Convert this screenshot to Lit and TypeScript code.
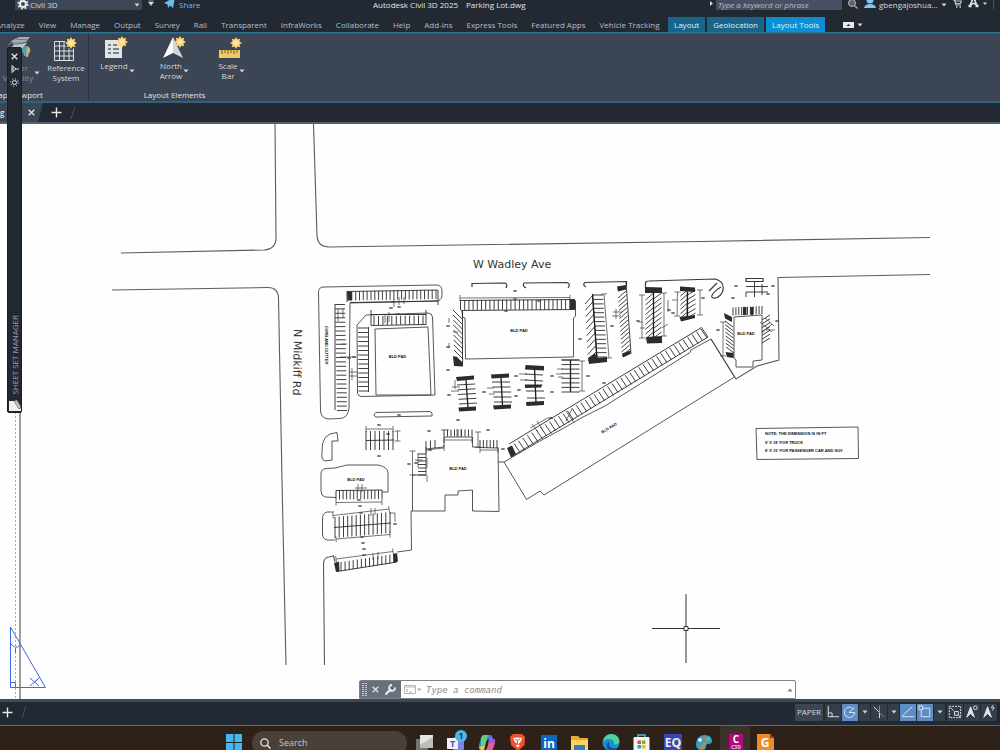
import { LitElement, html, css, svg, TemplateResult } from "lit";
import { customElement } from "lit/decorators.js";
import { classMap } from "lit/directives/class-map.js";

type Pt = [number, number];

/** n parallel strokes, evenly spread from a to b, each reaching by (dx, dy). */
function stalls(a: Pt, b: Pt, n: number, dx: number, dy: number): string {
  let d = "";
  for (let i = 0; i < n; i++) {
    const t = i / (n - 1);
    const x = a[0] + (b[0] - a[0]) * t;
    const y = a[1] + (b[1] - a[1]) * t;
    d += `M${x.toFixed(1)} ${y.toFixed(1)}l${dx} ${dy}`;
  }
  return d;
}

/** A dimension line with end ticks. */
function dim(a: Pt, b: Pt): string {
  const len = Math.hypot(b[0] - a[0], b[1] - a[1]);
  const ux = (b[0] - a[0]) / len;
  const uy = (b[1] - a[1]) / len;
  const tick = (p: Pt) => `M${p[0] - uy * 3} ${p[1] + ux * 3}L${p[0] + uy * 3} ${p[1] - ux * 3}`;
  return `M${a}L${b}${tick(a)}${tick(b)}`;
}

const roads = [
  "M275 124L276 238Q276 249 264 250L121 253",
  "M313.500 124L317 236Q318 247 329 247L700 241.500L930 237.500",
  "M112 290L268 287.500Q278 287.500 278.500 298L282 480L286 665",
  "M324.500 665L323.500 564Q324 557 329 557L333.500 556L335 562",
  "M930 274.500L778 277.500L779 360L757 366L736 379L711 339",
];

const outlines = [
  "M318.500 293Q318 287 324 287L436 285Q442 285 442 291V296Q441 301 436 301L350 303L349 408Q348 418 340 418.500L328 419Q321 418 320.500 411Z",
  "M357.500 393L357 325L366 315L428 313Q432 313 432.500 317L435 395L361 396.500Q358 396 357.500 393Z",
  "M375 329L428 327L431 395H376Z",
  "M376 412.500L430 411.500Q433 412 432 416L376 417Q372 415 376 412.500Z",
  "M462 311L462.500 317L465 318L465.500 359L573.500 357V318L575.500 316V301",
  "M711 339L734.500 377L544 495L540 491L526.500 499.500L504 462L540 441L562 429L583 417L605 406L690 352.500L691 350L711 339",
  "M498 462H504",
  "M322 452Q321 433 337 432.500L338 441H332V460L325 461Q321 460 322 452Z",
  "M336 497.500L325 497Q321 496 321 491V474Q321 469 326 468.500L335 468L347 465H378Q388 467 388 473V492H382",
  "M334 512H327Q322.500 513 322.500 519V534Q323 540 328 540L335 540",
  "M397 552L411.500 550L411 511H445V495H458V491L472.500 490V511L499 511.500L498 448L480 447.500L472.500 447V437H444V447L435 448L426 449V475H412.500V511",
  "M734 317L762 315V360L753 361V367H736V360L734 358Z",
  "M756 428.500L858 427L858.500 458.500L757 459.500Z",
];

const kerbs = [
  "M472 287V283.500L505 283Q508 284 506 288",
  "M526 288Q522 286 524 283L567 282.500Q571 284 568 288",
  "M586 287Q582 285 585 282.500L626.500 281.500V286",
  "M645.500 288V282.500Q646 281 649 281L715 279Q724 281 723 289",
  "M723 288C724 293 718 299 713 298C709 297 715 290 721 287M709 291L717 283",
  "M746 278.500H763V281.500H746Z",
];

const stallRuns = [
  "M347 291.500L437.500 290M335 304V410M350 302.500L438 301M438 290V305M347 291V302",
  stalls([348, 291.5], [436, 290], 24, 0, 9),
  stalls([335, 304.5], [337, 410.5], 25, 10, 0),
  "M371 325.500L426 324.500M371 325V310M426 325V310M371 314.500H426M368.500 327V392",
  stalls([374, 325], [423, 324.5], 12, 0, -9),
  stalls([368, 328], [368.5, 391], 15, -10, 0),
  "M460 300.500L575 299.500M461 310.500L575 309.500",
  stalls([460.5, 300], [574, 299.5], 28, 0, 10),
  "M462.500 311V365",
  stalls([453, 310], [454, 350], 9, 9, 9),
  "M592.500 294L597 359",
  stalls([593, 295], [596, 352], 10, -8, 9),
  stalls([593, 295], [597, 357], 15, 10, 0),
  "M626 282L631 354",
  stalls([626, 291], [630, 349], 15, -8, 7),
  "M653.500 288V343",
  stalls([653.5, 293], [653.5, 332], 9, -8, 7),
  stalls([653.5, 299], [653.5, 338], 9, 8, -6),
  "M687.500 288L687 320",
  stalls([687.5, 290], [687.5, 312], 6, -7, 6),
  stalls([687.5, 295], [687.5, 318], 6, 8, -5),
  "M754.500 282V297M746 286.500H768M746 292H768M746 292V297M762 284V295",
  stalls([733, 315.500], [762, 314], 11, 0, -8),
  stalls([725, 321], [726, 347], 8, 8, 6),
  stalls([762, 320], [762, 343], 7, 8, -5),
  stalls([457, 385], [459, 404], 5, 18, -1),
  stalls([492, 382], [494, 402], 5, 18, 0),
  stalls([525, 374], [525, 380], 2, 18, 1),
  stalls([526, 391], [527, 398], 2, 18, 0),
  "M561.500 360H579",
  stalls([561.5, 360], [561.5, 392], 8, 18, 0),
  "M509 444L701.500 327.500L708 337",
  "M511 457L708 337",
  stalls([514, 443.5], [701, 329], 43, 6, 9),
  "M366 440.500L394 440",
  stalls([366, 431], [393, 431], 7, 0, 19),
  "M336 490.500L382 490",
  stalls([336, 490.5], [382, 490], 14, 0, 9),
  "M334 527.500L391 523",
  stalls([335, 517], [390, 512], 14, 0, 21),
  "M337 571.500L397 562",
  stalls([341, 562], [394, 554], 14, 0, 9),
  stalls([444, 436.5], [472, 436.5], 9, 0, -7),
  stalls([426, 449], [435, 448], 3, 0, -8),
  stalls([480, 448], [497, 448], 6, 0, -8),
  stalls([426, 454], [426, 475], 7, -8, 0),
];

const spines = "M466 380L468 408M501 377L502.500 406M534.500 368L536 403M570.500 360V392M653.500 288V340M592.500 294L597 359M687.500 290V318";

const dims = [
  dim([460, 298], [570, 297.5]),
  dim([604, 294], [609, 358]),
  dim([582, 361], [582, 391]),
  dim([642, 295], [642, 338]),
  dim([664, 293], [664, 336]),
  dim([677.5, 292], [677, 316]),
  dim([700, 290], [700, 315]),
  dim([723, 322], [723, 356]),
  dim([366, 429], [393, 429]),
  dim([397.5, 431], [397.5, 441]),
  dim([336, 502.5], [382, 502]),
  dim([333, 515.5], [389, 509]),
  dim([336, 539], [390, 534.5]),
  dim([336, 559], [393, 551.5]),
  dim([412.5, 451], [412.5, 475]),
  dim([444, 440], [472, 440]),
  dim([480, 450], [498, 450]),
  dim([478, 432], [478, 447]),
  dim([426, 450], [444, 448]),
  "M453 332l5 0M449 318v5M449 343v5M557 369h6M556 374h6M558 377h5M519 374h8M520 380h7M487 388h7M489 394h6",
  "M452 387h8M451 391h8M455 380v9M338 309v12M343 308v10M341 344h6M352 368v12M349 372h9M349 376h9M340 357h16M385 314v9M389 312v10M394 299v8M399 297v8M404 297v7",
  "M616 309v10M613 312h9M612 316h9M638 322h5M640 328h5M668 300v12M672 300l5 0M668 324l-6 4M760 322l12 10M762 333l10-9M765 318l9 8M766 330h9",
  "M532 424l6 8M537 421l5 8M530 428l14-8q3-3 9-2M566 411l8 12M572 409l-6 12M415 460h8M418 453v14M427 458v10M427 475v7",
  "M457 429v8M461 429v8M441 430h8M358 484v8M362 484v8M355 488h12M371 508v8M375 508v7M373 553v7M378 552v7M389 513h6v9",
];

const solids = [
  "M570 300H575.500V309.500H570Z",
  "M453 356L457 357L463 363V366.500L454 366Z",
  "M456 377L474 375.500V379.500L457 381Z",
  "M458.500 407.500L476 406.500V410.500L459 411.500Z",
  "M491 374.500L509 373.500V377.500L491.500 378.500Z",
  "M493 405.500L511 404.500V408.500L494 409.500Z",
  "M525.500 365L544 366V370.500L525 369.500Z",
  "M525 384.500L542.500 384.500L541 387.500L525 388Z",
  "M526 402L544 401V405L526.500 406Z",
  "M588 358L595 353L597 358L607 357V362L589 364Z",
  "M617 286.500L626 285V289.500L618 291.500Z",
  "M622 353.500L630.500 350.500V354L623 357.500Z",
  "M645 287L662 287.500V293L645 293Z",
  "M646 337L662 336V343L647 343.500Z",
  "M680 286.500L695 287.500V292L680 291Z",
  "M679.500 317L687 316L695 315V318L681 321.500Z",
  "M743 307H746.500V315H743ZM750.500 307H753V315H750.500Z",
  "M724 313L732 317V322L725 318.500Z",
  "M725.500 352L733.500 353V358L727 357Z",
  "M507 448L512 445.500L516 454L511 457.500Z",
  "M334 563L339 561.500L339.500 571L336 572Z",
  "M393 554L397 553L398 561.500L393.500 562.500Z",
  "M347 291.500L352 292V300.500H348Z",
];

// Centres of the unlettered dimension tags.
const tags: Pt[] = [
  [391, 308], [399, 307], [393, 302], [398, 314], [354, 357], [349, 358], [515, 291], [515, 299], [506, 311],
  [539, 301], [448, 326], [448, 347], [448, 370], [449, 395], [484, 392], [516, 376], [516, 396], [519, 390],
  [552, 376], [552, 392], [588, 376], [580, 339], [612, 326], [638, 321], [669, 310], [703, 298], [673, 313],
  [736, 286], [733, 298], [773, 286], [768, 294], [777, 321], [718, 330], [604, 383], [551, 418], [379, 425],
  [379, 456], [388, 434], [429, 431], [458, 420], [488, 430], [503, 449], [430, 450], [409, 464], [416, 463],
  [359, 500], [360, 506], [361, 513], [362, 537], [363, 543], [364, 549], [364, 555], [395, 524], [399, 415],
];

const tabs = [
  "Analyze", "View", "Manage", "Output", "Survey", "Rail", "Transparent", "InfraWorks", "Collaborate",
  "Help", "Add-ins", "Express Tools", "Featured Apps", "Vehicle Tracking",
];
const contextTabs = ["Layout", "Geolocation", "Layout Tools"];

const spark = (x: number, y: number) => svg`
  <g transform="translate(${x} ${y})">
    <path d="M0-6L1.400-3.400L4.200-4.200L3.400-1.400L6 0L3.400 1.400L4.200 4.200L1.400 3.400L0 6L-1.400 3.400L-4.200 4.200L-3.400 1.400L-6 0L-3.400-1.400L-4.200-4.200L-1.400-3.400Z" fill="#ffd978"/>
    <circle r="2.300" fill="#ffe6a3"/>
  </g>`;

const toolIcons: Record<string, TemplateResult> = {
  layer: svg`<path d="M5 4L13 0H24L20 5L8 8Z" fill="#a9adb3"/><path d="M2 8L7 5M4 6H21M10 2L22 3" stroke="#6e757f"/><path d="M3 12L8 8L21 6L16 12Z" fill="#c3c6ca"/><path d="M16 12A5 5 0 0 1 21 9V19H18Q18 16 16 15Z" fill="#4fa0b8"/><path d="M21 9A5 5 0 0 1 24 15Q22 17 22 20H20Z" fill="#cfae72"/>`,
  grid: svg`<path d="M0.500 4.500H19.500V23.500H0.500ZM0.500 9H19.500M0.500 14H19.500M0.500 19H19.500M5.500 4.500V23.500M10 4.500V23.500M15 4.500V23.500" fill="none" stroke="#dfe1e4"/><circle cx="17" cy="6" r="6" fill="#3c4553"/>${spark(17, 6)}`,
  legend: svg`<path d="M3 3H16L20 8V21H3Z" fill="#e3e4e6"/><path d="M6 8H9M11 8H15M6 12H9M11 12H17M6 16H9M11 16H17" stroke="#59616d" stroke-width="1.300"/>${spark(20, 5)}`,
  arrow: svg`<path d="M14 0L24 21L14 16Z" fill="#d3d5d8"/><path d="M14 0L4 21L14 16Z" fill="#fafafa"/>${spark(21, 5)}`,
  scale: svg`<rect x="3" y="13" width="21" height="8" fill="#f1ca63"/><path d="M6 13V17M9 13V16M12 13V17M15 13V16M18 13V17M21 13V16" stroke="#6b5a2c"/>${spark(20, 6)}`,
};

const statusIcons: Record<string, TemplateResult> = {
  ortho: svg`<path d="M3.500 2V13.500H15M3.500 9.500H7.500V13.500" />`,
  polar: svg`<path d="M12 5A5.500 5.500 0 1 0 13.500 9H7.500L13 4"/>`,
  iso: svg`<path d="M3 3L9 9V15" /><path d="M9 9L14 14" stroke="#c96a76"/><path d="M9 2V9" stroke="#69b06d"/>`,
  track: svg`<path d="M2 13.500H15M2 13L13 3"/>`,
  snap: svg`<path d="M4.500 4.500H13.500V13.500H4.500Z"/><path d="M2 2H6V6H2Z" fill="#5c8dc4"/>`,
  scale: svg`<path d="M2.500 2.500H14.500V14.500H2.500Z" stroke-dasharray="2 1"/><path d="M4 4L7 7M8 8H12V12H8ZM12 12L14 14" />`,
  anno: svg`<path d="M7 3L11 14L7 10L3 14Z" fill="#e3e6ea"/><circle cx="12" cy="4" r="2"/>`,
  auto: svg`<path d="M7 3L11 14L7 10L3 14Z" fill="#e3e6ea"/><path d="M13 1L11 4H14L12 7"/>`,
};

interface StatusItem { id: string; label: string; on?: boolean; menu?: boolean; gap?: boolean }
const statusItems: StatusItem[] = [
  { id: "ortho", label: "Ortho mode" },
  { id: "polar", label: "Polar tracking", on: true, menu: true },
  { id: "iso", label: "Isometric drafting", menu: true },
  { id: "track", label: "Object snap tracking", on: true },
  { id: "snap", label: "Object snap", on: true, menu: true },
  { id: "scale", label: "Annotation visibility", gap: true },
  { id: "anno", label: "Annotation scale" },
  { id: "auto", label: "Add scales automatically" },
];

const glyph = (s: string, x: number, y: number, size: number, fill: string) =>
  svg`<text x=${x} y=${y} font-size=${size} font-weight="700" text-anchor="middle" fill=${fill}>${s}</text>`;

const apps: { name: string; active?: boolean; art: TemplateResult }[] = [
  { name: "Task view", art: svg`<rect x="1" y="7" width="12" height="12" fill="#77736f"/><rect x="5" y="3" width="13" height="13" fill="#e4e4e4"/><path d="M5 13L18 5V16H5Z" fill="#bcbcbc"/>` },
  { name: "Teams", art: svg`<rect x="7" y="5" width="11" height="14" rx="3" fill="#7b83eb"/><rect x="1" y="6" width="11" height="11" fill="#f2f2ff"/>${glyph("T", 6.5, 15, 9, "#4b53bc")}<circle cx="15" cy="4" r="6" fill="#4cb4ee"/>${glyph("1", 15, 7, 8, "#12324a")}` },
  { name: "Copilot", art: svg`<path d="M7 3H13Q15 3 15.500 5L16 7H12Q10 7 9 10L7 17Q6 19 4 18Q1 17 2 13L4 6Q5 3 7 3Z" fill="#2b8fe0"/><path d="M4 6Q5 3 7 3H11L8 14Q7 17 4 17Z" fill="#5fcf7d"/><path d="M12 7H15Q19 7 18 11L16 17Q15 19 12 19H8Q10 17 11 13Z" fill="#e45a9b"/><path d="M13 3L16 7H18L17 11H12Z" fill="#8a62e8"/><path d="M4 14H8L7 18Q4 19 2 16Z" fill="#f4c53c"/>` },
  { name: "Brave", art: svg`<path d="M5 2H14L17 5L16.500 13L10 19L3 13L2 5Z" fill="#f4512c"/><path d="M5 6L9 5.500L14 6L12.500 10L10 12.500L7 10Z" fill="#fff"/><path d="M7 7L9.500 8.500L12 7M9.500 8V12" stroke="#f4512c" fill="none"/><path d="M7.500 13.500L10 12.500L12 13.500L10 15.500Z" fill="#fff"/>` },
  { name: "LinkedIn", art: svg`<rect x="2" y="3" width="16" height="16" fill="#0a66c2"/>${glyph("in", 10, 16, 12, "#fff")}` },
  { name: "File Explorer", art: svg`<path d="M1 4H8L10 6H18V18H1Z" fill="#e8a92e"/><path d="M1 8H18V18H1Z" fill="#ffd35c"/><path d="M4 13H15V19H4Z" fill="#2f7fb9"/>` },
  { name: "Edge", art: svg`<circle cx="10" cy="10.500" r="8.500" fill="#1b8fd0"/><path d="M2 9Q4 2 11 2Q18 3 18.500 9Q18 13 13 12.500Q14 8 9 7Q4 7 2 10Z" fill="#52cf9d"/><path d="M8 9Q7 14 11 16Q15 17 17 15Q13 20 8 18Q3 14 8 9Z" fill="#0c4f9c"/>` },
  { name: "Microsoft Store", art: svg`<path d="M6 6V3H13V6" fill="none" stroke="#49b8e8" stroke-width="1.600"/><rect x="1.500" y="5" width="16" height="14" rx="1" fill="#f4f4f4"/><path d="M5.500 8.500H9V12H5.500Z" fill="#e8502c"/><path d="M10 8.500H13.500V12H10Z" fill="#7bb829"/><path d="M5.500 13H9V16.500H5.500Z" fill="#1c9ce0"/><path d="M10 13H13.500V16.500H10Z" fill="#fbb813"/>` },
  { name: "EQ", art: svg`<rect x="1" y="2" width="18" height="17" fill="#3743b8"/>${glyph("EQ", 10, 15, 12, "#e9edff")}<circle cx="13.500" cy="11" r="4" fill="none" stroke="#dfe59a" stroke-width="1"/>` },
  { name: "Paint", art: svg`<path d="M2 12Q2 4 10 3Q18 3 18 9Q18 12 14 12Q12 12 12 15Q12 18 8 18Q2 18 2 12Z" fill="#2fa3cf"/><circle cx="6" cy="8" r="1.800" fill="#fff"/><circle cx="10" cy="6" r="1.800" fill="#e06a4e"/><circle cx="14" cy="7" r="1.800" fill="#65c466"/><path d="M5 16L11 9L13 11L8 18Z" fill="#b98656"/>` },
  { name: "Civil 3D", active: true, art: svg`<path d="M2 3H4V19H2Z" fill="#6c0e50"/><rect x="4" y="2" width="14" height="17" fill="#a90f7c"/>${glyph("C", 11, 11, 10, "#fff")}${glyph("C3D", 11, 17, 5, "#f3c5e5")}` },
  { name: "Foxit", art: svg`<path d="M1 2H14L18 6V19H1Z" fill="#f08b25"/><path d="M14 2V6H18Z" fill="#6a4a22"/>${glyph("G", 9, 15, 12, "#fff")}` },
];

@customElement("drawing-sheet")
class DrawingSheet extends LitElement {
  static styles = css`
    :host { display: block; width: 100%; height: 100%; }
    .sheet { display: block; width: 100%; height: 100%; }
    .road { stroke: #5c5c5c; stroke-width: 1.1; }
    .outline { stroke: #444; stroke-width: 0.9; }
    .kerb { stroke: #3a3a3a; stroke-width: 1.2; }
    .stall { stroke: #2a2a2a; stroke-width: 0.9; }
    .spine { stroke: #1c1c1c; stroke-width: 1.3; }
    .dim { stroke: #3a3a3a; stroke-width: 0.7; }
    .solid { fill: #2c2c2c; }
    .tag { fill: #444; }
    .street { font: 11px "DejaVu Sans", sans-serif; fill: #333; }
    .pad { font: 700 4px "Liberation Sans", sans-serif; fill: #111; text-anchor: middle; }
    .note { font: 700 4px "Liberation Sans", sans-serif; fill: #111; }
    .cross { stroke: #333; }
    .paper { stroke: #3a3a3a; }
    .dash { stroke: #aaa; stroke-dasharray: 2 2; }
    .ucs { stroke: #3f68e0; }
  `;

  render() {
    const pad = (x: number, y: number, r = 0) =>
      svg`<text class="pad" transform="translate(${x} ${y}) rotate(${r})" y="1.500">BLD PAD</text>`;
    return html`
      <svg class="sheet" viewBox="0 124 1000 575" preserveAspectRatio="xMinYMin meet" fill="none" role="img" aria-label="Parking lot drawing">
        <path class="dash" d="M15.500 412V699" />
        <path class="paper" d="M20 412V699" />
        <path class="road" d=${roads.join("")} />
        <path class="outline" d=${outlines.join("")} />
        <path class="kerb" d=${kerbs.join("")} />
        <path class="stall" d=${stallRuns.join("")} />
        <path class="spine" d=${spines} />
        <path class="dim" d=${dims.join("")} />
        <path class="solid" d=${solids.join("")} />
        ${tags.map(([x, y]) => svg`<rect class="tag" x=${x - 1.7} y=${y - 0.7} width="3.400" height="1.400" />`)}
        <text class="street" x="473" y="268">W Wadley Ave</text>
        <text class="street" transform="translate(294 329) rotate(91)">N Midkiff Rd</text>
        <text class="pad" transform="translate(326 345) rotate(90)" y="1.500">CURB AND GUTTER</text>
        ${pad(397.5, 356)}${pad(519, 330.5)}${pad(609, 428, -31)}${pad(746, 333.5)}${pad(458, 468)}${pad(356, 479)}
        <text class="note" x="765" y="435">NOTE; THE DIMENSION IS IN FT</text>
        <text class="note" x="765" y="444">9' X 18' FOR TRUCK</text>
        <text class="note" x="765" y="452">8' X 15' FOR PASSENGER CAR AND SUV</text>
        <path class="cross" d="M652 628.500H684M688 628.500H720M686 594V626M686 631V663M684 626.500H688V630.500H684Z" />
        <path class="ucs" d="M10.500 627V687.500H45.500ZM10.500 682.500H15.500V687M30 678L39 686M39 678L30 686M11 644Q16 650 20 645M15.500 648V653M35 682L40 677" />
      </svg>`;
  }
}

@customElement("app-root")
class AppRoot extends LitElement {
  static styles = css`
    :host {
      display: flex; flex-direction: column; position: relative; height: 100vh; overflow: hidden;
      font-family: "Open Sans", "Noto Sans", sans-serif; font-size: 8px; line-height: 10px;
      color: #d5d8dc; background: #222933;
    }
    * { box-sizing: border-box; }
    button, select, input { font: inherit; color: inherit; background: none; border: 0; margin: 0; padding: 0; }
    svg { display: block; flex: none; }

    .title { flex: none; display: flex; align-items: flex-start; height: 17px; line-height: 9px; white-space: nowrap; }
    .quick { display: flex; flex: 373 0 0; gap: 6px; align-items: flex-start; min-width: 0; }
    .lead { width: 9px; }
    .work { position: relative; width: 127px; height: 10px; background: #3d4655; }
    .space { appearance: none; width: 100%; height: 10px; padding: 0 0 1px 15px; line-height: 9px; }
    .gear { position: absolute; left: 2px; top: -2px; }
    .caret { position: absolute; right: 2px; top: 3px; }
    .share { display: flex; gap: 4px; margin-left: 4px; color: #72b8e8; line-height: 9px; }
    .names { flex: 337 0 0; display: flex; gap: 8px; color: #e4e6e9; min-width: 0; }
    .find { display: flex; flex: 290 0 0; gap: 6px; align-items: flex-start; min-width: 0; }
    .hint { margin-right: -4px; }
    .query { width: 126px; height: 10px; padding: 0 0 1px 2px; background: #465062; font-style: italic; line-height: 9px; }
    .query::placeholder { color: #b9bec6; }
    .user { display: flex; gap: 3px; line-height: 9px; }
    .user .tri { margin-top: 3px; }

    .tabs { flex: none; display: flex; height: 16px; border-bottom: 1px solid #2b7595; white-space: nowrap; }
    .plain { display: flex; gap: 14px; margin-left: -4px; width: 672px; }
    .tab { color: #b9bec5; height: 15px; }
    .context { display: flex; gap: 2px; }
    .ctx { background: #17658a; color: #e2edf3; padding: 0 6px; height: 15px; }
    .ctx.on { background: #0a8fd4; }
    .mini { display: flex; gap: 3px; align-items: center; margin-left: 18px; }

    .ribbon { flex: none; display: flex; height: 70px; background: #3c4553; border-bottom: 2px solid #2b6480; border-top: 1px solid #33586e; }
    .panel { display: flex; flex-direction: column; justify-content: space-between; align-items: center; padding: 3px 0 0; border-right: 1px solid #2a323d; }
    .panel.first { width: 89px; }
    .panel.second { width: 171px; border-right: 0; }
    .tools { display: flex; align-self: stretch; }
    .first .tools { justify-content: flex-end; gap: 4px; }
    .first .caption { margin-right: 54px; }
    .second .tools { gap: 7px; }
    .tool { display: flex; flex-direction: column; align-items: center; flex: none; line-height: 10px; }
    .first .tool { width: 44px; }
    .second .tool { width: 50px; }
    .tool.faded { color: #8b929c; }
    .words { position: relative; display: block; text-align: center; white-space: pre-line; }
    .first .words { margin-top: 2px; }
    .drop { position: absolute; right: -7px; top: 8px; }
    .caption { line-height: 12px; color: #e2e4e7; white-space: nowrap; }

    .files { flex: none; display: flex; align-items: center; height: 21px; border-bottom: 2px solid #59606d; gap: 8px; }
    .file { display: flex; align-items: center; gap: 24px; height: 19px; width: 43px; background: #3c4553; clip-path: polygon(0 0, 100% 0, 38px 100%, 0 100%); color: #e6e8ea; font-weight: 600; }

    .canvas { position: relative; flex: 1; min-height: 0; background: #fefefe; }
    .command { position: absolute; left: 359px; right: 204px; bottom: 0; height: 19px; display: flex; align-items: center; background: #fff; border: 1px solid #7d828a; border-radius: 2px 2px 0 0; }
    .grip { display: flex; align-items: center; gap: 5px; align-self: stretch; width: 41px; padding-left: 2px; background: #6a707b; }
    .prompt { margin: 0 4px 0 3px; }
    .entry { flex: 1; min-width: 0; font: italic 9px "DejaVu Sans Mono", monospace; height: 16px; }
    .entry::placeholder { color: #8e8e8e; }
    .up { margin-right: 2px; }

    .status { flex: none; display: flex; align-items: center; height: 27px; border-top: 3px solid #3f4856; border-bottom: 1px solid #2b7a94; padding: 0 3px 3px 2px; gap: 8px; }
    .modes { display: flex; gap: 1px; margin-left: auto; }
    .paperspace { width: 28px; height: 17px; background: #3c4553; margin-right: 1px; }
    .mode { width: 16px; height: 17px; background: #343d4a; }
    .mode.on { background: #5c8dc4; }
    .mode.gap { margin-left: 1px; }
    .more { width: 11px; height: 17px; background: #343d4a; }
    .more svg { margin: 0 auto; }

    .taskbar { flex: none; display: flex; align-items: flex-start; height: 24px; overflow: hidden; background: #2d2118; padding-left: 226px; }
    .start { margin: 8px 10px 0 0; }
    .seek { display: flex; align-items: center; gap: 8px; flex: none; width: 155px; height: 24px; margin: 5px 3px 0 0; padding-left: 8px; border-radius: 12px; background: #4b4038; font-size: 9px; }
    .seekbox { width: 100px; line-height: 14px; }
    .seekbox::placeholder { color: #c9c4bf; }
    .apps { display: flex; gap: 1px; }
    .app { display: flex; flex: none; justify-content: center; width: 30px; height: 26px; padding-top: 6px; border-radius: 3px; }
    .app.on { background: #3d3129; }

    .palette { position: absolute; left: 7px; top: 47px; width: 15px; height: 366px; display: flex; flex-direction: column; align-items: center; gap: 5px; padding: 5px 0 0; background: #222933; border: 1px solid #181d25; border-radius: 2px; }
    .side { writing-mode: vertical-rl; transform: rotate(180deg); margin-top: auto; color: #9aa0a9; line-height: 12px; white-space: nowrap; }
  `;

  private caret(fill = "#d5d8dc") {
    return html`<svg class="tri" width="6" height="4" viewBox="0 0 6 4"><path d="M0.500 0.500H5.500L3 3.500Z" fill=${fill} /></svg>`;
  }

  private tool(icon: string, words: string, menu = true, faded = false) {
    return html`<button class=${classMap({ tool: true, faded })}>
      <svg width="24" height="24" viewBox="0 0 24 24" overflow="visible">${toolIcons[icon]}</svg>
      <span class="words">${words}${menu ? html`<span class="drop">${this.caret()}</span>` : ""}</span>
    </button>`;
  }

  private cross() {
    return html`<svg width="7" height="7" viewBox="0 0 7 7"><path d="M0.700 0.700L6.300 6.300M6.300 0.700L0.700 6.300" stroke="#dfe2e6" stroke-width="1.300" /></svg>`;
  }

  private plus() {
    return html`<svg width="11" height="11" viewBox="0 0 11 11"><path d="M5.500 0.500V10.500M0.500 5.500H10.500" stroke="#e6e8ea" stroke-width="1.400" /></svg>`;
  }

  render() {
    return html`
      <header class="title">
        <div class="quick">
          <span class="lead"></span>
          <span class="work">
            <select class="space" aria-label="Workspace"><option>Civil 3D</option></select>
            <svg class="gear" width="12" height="12" viewBox="0 0 12 12"><circle cx="6" cy="6" r="3" fill="none" stroke="#eceef0" stroke-width="2" /><circle cx="6" cy="6" r="4.800" fill="none" stroke="#eceef0" stroke-width="1.600" stroke-dasharray="1.900 1.870" /></svg>
            <span class="caret">${this.caret()}</span>
          </span>
          <svg width="6" height="7" viewBox="0 0 6 7"><path d="M0.500 0H5.500M0.500 2H5.500L3 5.500Z" fill="#d5d8dc" stroke="#d5d8dc" stroke-width="0.600" /></svg>
          <button class="share"><svg width="11" height="8" viewBox="0 0 11 8"><path d="M0 3L11-3L9 8L6 5.500L4 8L3.500 4.500Z" fill="#72b8e8" /></svg>Share</button>
        </div>
        <div class="names"><span>Autodesk Civil 3D 2025</span><span>Parking Lot.dwg</span></div>
        <div class="find">
          <svg class="hint" width="4" height="7" viewBox="0 0 4 7"><path d="M0 1V6L3 3.500Z" fill="#d5d8dc" /></svg>
          <input class="query" aria-label="Search help" placeholder="Type a keyword or phrase" />
          <svg width="10" height="9" viewBox="0 0 10 9"><circle cx="4" cy="3" r="3.500" fill="#59626f" stroke="#b5bac2" /><path d="M6.500 5.500L9.500 8.500" stroke="#c9a06d" stroke-width="1.400" /></svg>
          <button class="user"><svg width="12" height="8" viewBox="0 0 12 8"><circle cx="6" cy="0" r="3.500" fill="#83c4ef" /><path d="M0 8Q1 4 6 4T12 8Z" fill="#83c4ef" /></svg>gbengajoshua...${this.caret()}</button>
          <svg width="9" height="8" viewBox="0 0 9 8"><path d="M0 0H1.500L3 5H8M2 1H8.500L7.500 3.500H2.500" fill="none" stroke="#c4c8cd" stroke-width="1.200" /><path d="M3 7H4.500M6.500 7H8" stroke="#c4c8cd" stroke-width="1.500" /></svg>
          <svg width="26" height="9" viewBox="0 0 26 9"><path d="M5.500-3L2 6M5.500-3L9 6M3 4.500Q6 2.500 8 4.500" fill="none" stroke="#dfe2e6" stroke-width="1.700" /><path d="M0.500 6H3.500M7.500 6H10.500" stroke="#dfe2e6" stroke-width="2.500" /><path d="M15 2.500H19L17 5Z" fill="#d5d8dc" /><path d="M25.500 0V9" stroke="#4a525f" /></svg>
        </div>
      </header>

      <nav class="tabs">
        <div class="plain">${tabs.map((t) => html`<button class="tab">${t}</button>`)}</div>
        <div class="context">${contextTabs.map((t, i) => html`<button class=${classMap({ ctx: true, on: i === 2 })}>${t}</button>`)}</div>
        <button class="mini" aria-label="Minimise ribbon"><svg width="11" height="6" viewBox="0 0 11 6"><rect width="11" height="6" fill="#e9eaec" /><path d="M3.500 4H7.500L5.500 2Z" fill="#222933" /></svg>${this.caret()}</button>
      </nav>

      <section class="ribbon">
        <div class="panel first">
          <div class="tools">${this.tool("layer", "Layer\nVisibility", true, true)}${this.tool("grid", "Reference\nSystem", false)}</div>
          <span class="caption">Map Viewport</span>
        </div>
        <div class="panel second">
          <div class="tools">${this.tool("legend", "Legend")}${this.tool("arrow", "North\nArrow")}${this.tool("scale", "Scale\nBar")}</div>
          <span class="caption">Layout Elements</span>
        </div>
      </section>

      <div class="files">
        <button class="file"><span>g</span>${this.cross()}</button>
        <button aria-label="New drawing">${this.plus()}</button>
        <svg width="6" height="12" viewBox="0 0 6 12"><path d="M1 12L5 0" stroke="#4a525f" /></svg>
      </div>

      <main class="canvas">
        <drawing-sheet></drawing-sheet>
        <div class="command">
          <span class="grip">
            <svg width="5" height="13" viewBox="0 0 5 13"><path d="M1 0V13M4 0V13" stroke="#e6e8ea" stroke-width="1.500" stroke-dasharray="1 1" /></svg>
            ${this.cross()}
            <svg width="12" height="12" viewBox="0 0 12 12"><path d="M1.500 10.500L7 5" stroke="#eceef0" stroke-width="2.200" /><path d="M11 3.500A3 3 0 1 1 8 1" fill="none" stroke="#eceef0" stroke-width="1.800" /></svg>
          </span>
          <svg class="prompt" width="18" height="9" viewBox="0 0 18 9"><path d="M0.500 0.500H11.500V8.500H0.500ZM0.500 2H11.500M2 4L4 5.500L2 7M5 7H8" fill="none" stroke="#b5b5b5" /><path d="M13 3.500H17.500L15.200 6Z" fill="#aaa" /></svg>
          <input class="entry" aria-label="Command line" placeholder="Type a command" />
          <svg class="up" width="6" height="4" viewBox="0 0 6 4"><path d="M0.500 3.500H5.500L3 0.500Z" fill="#777" /></svg>
        </div>
      </main>

      <footer class="status">
        <button aria-label="New layout">${this.plus()}</button>
        <svg width="6" height="12" viewBox="0 0 6 12"><path d="M1 12L5 0" stroke="#4a525f" /></svg>
        <div class="modes">
          <button class="paperspace">PAPER</button>
          ${statusItems.map((s) => html`
            <button class=${classMap({ mode: true, on: !!s.on, gap: !!s.gap })} aria-label=${s.label}>
              <svg width="16" height="16" viewBox="0 0 17 17" fill="none" stroke="#e3e6ea">${statusIcons[s.id]}</svg>
            </button>
            ${s.menu ? html`<button class="more" aria-label="${s.label} options">${this.caret()}</button>` : ""}`)}
        </div>
      </footer>

      <div class="taskbar">
        <button class="start" aria-label="Start"><svg width="16" height="17" viewBox="0 0 16 17"><path d="M0 0H7.500V8H0ZM8.500 0H16V8H8.500ZM0 9H7.500V17H0ZM8.500 9H16V17H8.500Z" fill="#43b9f3" /></svg></button>
        <label class="seek">
          <svg width="11" height="11" viewBox="0 0 11 11"><circle cx="4.500" cy="4.500" r="3.700" fill="none" stroke="#e4e1de" stroke-width="1.300" /><path d="M7.200 7.200L10.500 10.500" stroke="#e4e1de" stroke-width="1.500" /></svg>
          <input class="seekbox" aria-label="Search" placeholder="Search" />
        </label>
        <div class="apps">
          ${apps.map((a) => html`<button class=${classMap({ app: true, on: !!a.active })} aria-label=${a.name}><svg width="20" height="20" viewBox="0 0 20 20" overflow="visible" font-family="Open Sans, sans-serif">${a.art}</svg></button>`)}
        </div>
      </div>

      <aside class="palette">
        ${this.cross()}
        <svg width="8" height="8" viewBox="0 0 8 8"><path d="M1 0V8M2 1.500L5 4L2 6.500ZM5 4H8" fill="none" stroke="#dfe2e6" /></svg>
        <svg width="9" height="9" viewBox="0 0 9 9"><circle cx="4.500" cy="4.500" r="2" fill="none" stroke="#dfe2e6" /><circle cx="4.500" cy="4.500" r="3.700" fill="none" stroke="#dfe2e6" stroke-dasharray="1.200 1.700" /></svg>
        <span class="side">SHEET SET MANAGER</span>
        <svg width="12" height="12" viewBox="0 0 12 12"><path d="M0 1H6L12 9V11H0Z" fill="#f0f0f0" /><path d="M5 1L8 0L12 7L10 9Z" fill="#c2c5c9" stroke="#555" stroke-width="0.600" /></svg>
      </aside>
    `;
  }
}
